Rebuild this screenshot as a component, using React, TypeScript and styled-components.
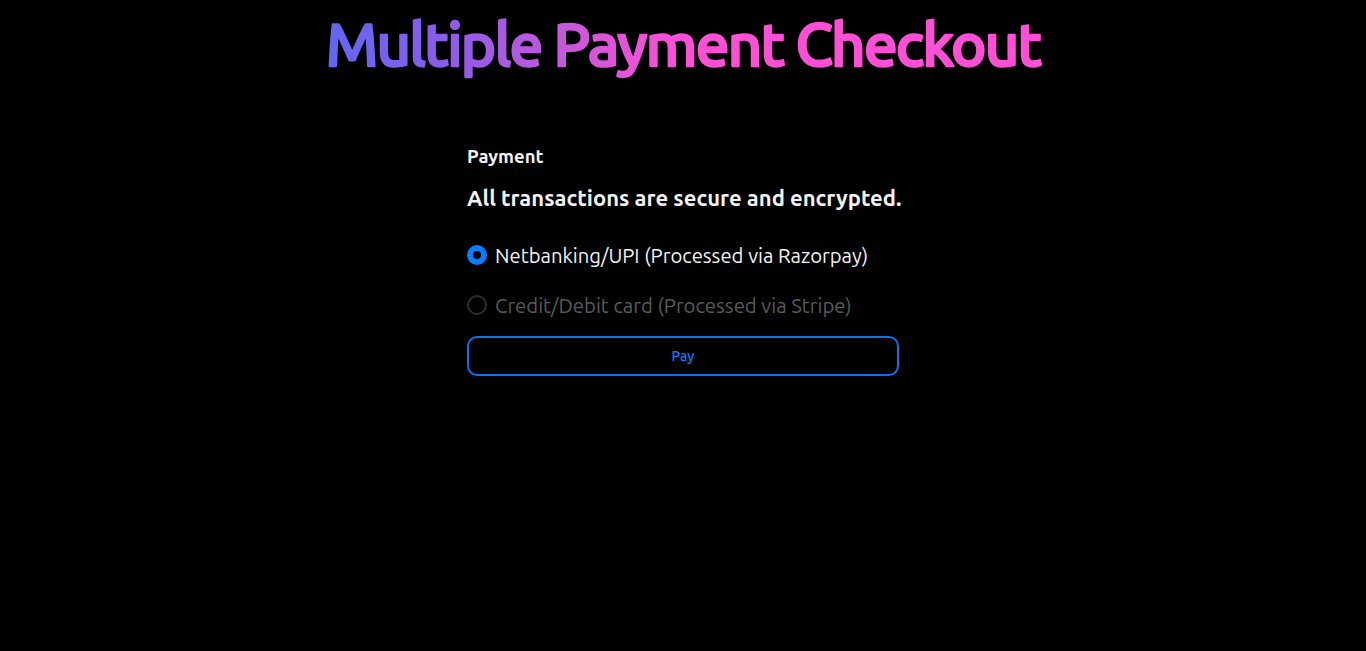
import styled, { createGlobalStyle } from "styled-components";
import { useState } from "react";

const GlobalStyle = createGlobalStyle`
  html, body {
    margin: 0;
    padding: 0;
    background: #000;
  }
  body {
    font-family: "Ubuntu", "Open Sans", "Noto Sans", sans-serif;
    color: #f2f2f2;
  }
`;

const methods = [
  { id: "razorpay", label: "Netbanking/UPI (Processed via Razorpay)" },
  { id: "stripe", label: "Credit/Debit card (Processed via Stripe)" },
];

export default function App() {
  const [method, setMethod] = useState("razorpay");

  return (
    <Page>
      <GlobalStyle />
      <Title>
        {/* gradient headline, stroked so the regular face reads as bold */}
        <svg width="740" height="70" viewBox="0 0 740 70">
          <defs>
            <linearGradient id="titleGrad" gradientUnits="userSpaceOnUse" x1="12" y1="0" x2="760" y2="0">
              <stop offset="0" stopColor="#6366f1" />
              <stop offset="0.16" stopColor="#8b5ce8" />
              <stop offset="0.31" stopColor="#c458dc" />
              <stop offset="0.41" stopColor="#e853d8" />
              <stop offset="0.5" stopColor="#ff4fd6" />
              <stop offset="1" stopColor="#ff4fd6" />
            </linearGradient>
          </defs>
          <TitleText x="370" y="57" textAnchor="middle">
            Multiple Payment Checkout
          </TitleText>
        </svg>
      </Title>
      <Checkout>
        <Label>Payment</Label>
        <Heading>All transactions are secure and encrypted.</Heading>
        <Options>
          {methods.map((m) => (
            <Option key={m.id} $active={method === m.id} onClick={() => setMethod(m.id)}>
              <Radio $active={method === m.id} />
              <span>{m.label}</span>
            </Option>
          ))}
        </Options>
        <PayBtn>Pay</PayBtn>
      </Checkout>
    </Page>
  );
}

const Page = styled.div`
  min-height: 651px;
  display: flex;
  flex-direction: column;
  align-items: center;
`;

const Title = styled.h1`
  margin: 9px 0 0;
  height: 70px;
  line-height: 0;

  svg {
    display: block;
  }
`;

const TitleText = styled.text`
  font-family: "Ubuntu", "Open Sans", sans-serif;
  font-size: 60px;
  font-weight: 500;
  letter-spacing: -1.8px;
  fill: url(#titleGrad);
  stroke: url(#titleGrad);
  stroke-width: 2.4px;
  stroke-linejoin: round;
`;

const Checkout = styled.div`
  width: 432px;
  margin-top: 66px;
  display: flex;
  flex-direction: column;
`;

const Label = styled.h3`
  margin: 0;
  font-size: 18.5px;
  line-height: 22px;
  font-weight: 700;
  color: #f2f2f2;
`;

const Heading = styled.h2`
  margin: 17px 0 0;
  font-size: 22px;
  line-height: 28px;
  font-weight: 700;
  white-space: nowrap;
  color: #f2f2f2;
`;

const Options = styled.div`
  margin-top: 30px;
  display: flex;
  flex-direction: column;
  gap: 24px;
`;

const Option = styled.label<{ $active: boolean }>`
  display: flex;
  align-items: center;
  gap: 8px;
  height: 26px;
  font-size: 20.3px;
  cursor: pointer;
  color: ${(p) => (p.$active ? "#f2f2f2" : "#5a5a5a")};
`;

const Radio = styled.span<{ $active: boolean }>`
  box-sizing: border-box;
  width: 20px;
  height: 20px;
  border-radius: 50%;
  flex-shrink: 0;
  border: ${(p) => (p.$active ? "6px solid #0a7cff" : "2px solid #2e2e2e")};
  background: #000;
`;

const PayBtn = styled.button`
  margin-top: 18px;
  height: 40px;
  background: transparent;
  border: 2px solid #0a72ee;
  border-radius: 10px;
  color: #0a7cff;
  font-family: inherit;
  font-size: 14px;
  font-weight: 500;
  cursor: pointer;
`;
